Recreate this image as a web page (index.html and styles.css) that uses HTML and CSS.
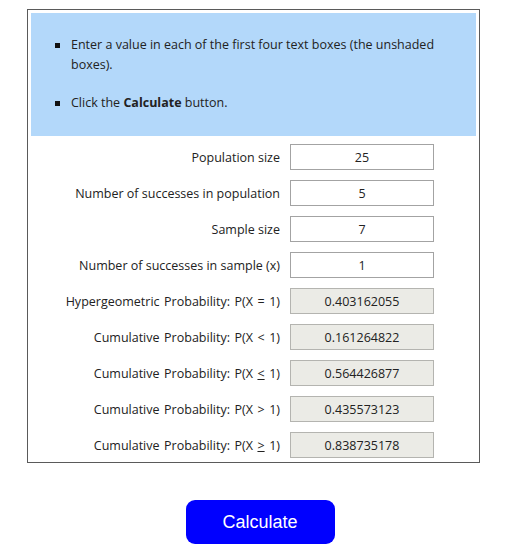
FILE: index.html
```html
<!DOCTYPE html>
<html>
<head>
<meta charset="utf-8">
<link rel="stylesheet" href="styles.css">
</head>
<body>
<div class="page">
  <div class="box">
    <div class="info">
      <ul class="steps">
        <li>Enter a value in each of the first four text boxes (the unshaded boxes).</li>
        <li>Click the <b>Calculate</b> button.</li>
      </ul>
    </div>
    <div class="rows">
      <div class="row"><span class="label">Population size</span><span class="field">25</span></div>
      <div class="row"><span class="label">Number of successes in population</span><span class="field">5</span></div>
      <div class="row"><span class="label">Sample size</span><span class="field">7</span></div>
      <div class="row"><span class="label">Number of successes in sample (x)</span><span class="field">1</span></div>
      <div class="row"><span class="label prob">Hypergeometric Probability: P(X = 1)</span><span class="field shaded">0.403162055</span></div>
      <div class="row"><span class="label prob">Cumulative Probability: P(X &lt; 1)</span><span class="field shaded">0.161264822</span></div>
      <div class="row"><span class="label prob">Cumulative Probability: P(X <u>&lt;</u> 1)</span><span class="field shaded">0.564426877</span></div>
      <div class="row"><span class="label prob">Cumulative Probability: P(X &gt; 1)</span><span class="field shaded">0.435573123</span></div>
      <div class="row"><span class="label prob">Cumulative Probability: P(X <u>&gt;</u> 1)</span><span class="field shaded">0.838735178</span></div>
    </div>
  </div>
  <div class="actions">
    <button class="calc" type="button">Calculate</button>
  </div>
</div>
</body>
</html>
```
FILE: styles.css
```css
html, body {
  margin: 0;
  padding: 0;
  background: #ffffff;
}
.page {
  padding: 9px 0 0 27px;
  font-family: "Open Sans", "Noto Sans", sans-serif;
  font-size: 12.5px;
  color: #222;
}
.box {
  width: 445px;
  border: 1px solid #5a5a5a;
  padding: 3px;
}
.info {
  background: #b3d8fa;
  padding: 22px 0 23px 0;
}
.steps {
  list-style: none;
  margin: 0;
  padding: 0 30px 0 40px;
}
.steps li {
  position: relative;
  line-height: 20px;
}
.steps li + li {
  margin-top: 18px;
}
.steps li::before {
  content: "";
  position: absolute;
  left: -16px;
  top: 8px;
  width: 5px;
  height: 5px;
  background: #111;
}
.rows {
  padding: 8px 0 1px 0;
  display: flex;
  flex-direction: column;
  gap: 10px;
}
.row {
  display: flex;
  align-items: center;
}
.label {
  width: 249px;
  text-align: right;
  padding-right: 10px;
  white-space: nowrap;
}
.label.prob {
  word-spacing: 1.3px;
}
.field {
  box-sizing: border-box;
  width: 144px;
  height: 26px;
  border: 1px solid #a3a3a3;
  background: #fff;
  display: flex;
  align-items: center;
  justify-content: center;
}
.field.shaded {
  background: #ebebe6;
  border-color: #b4b4b0;
}
.actions {
  width: 518px;
  margin-left: -27px;
  display: flex;
  justify-content: center;
  padding-top: 37px;
}
.calc {
  width: 149px;
  height: 44px;
  margin-left: 2px;
  border: none;
  border-radius: 9px;
  background: #0000ff;
  color: #fff;
  font-family: "Liberation Sans", Arial, sans-serif;
  font-size: 18px;
  padding: 0;
}
```
